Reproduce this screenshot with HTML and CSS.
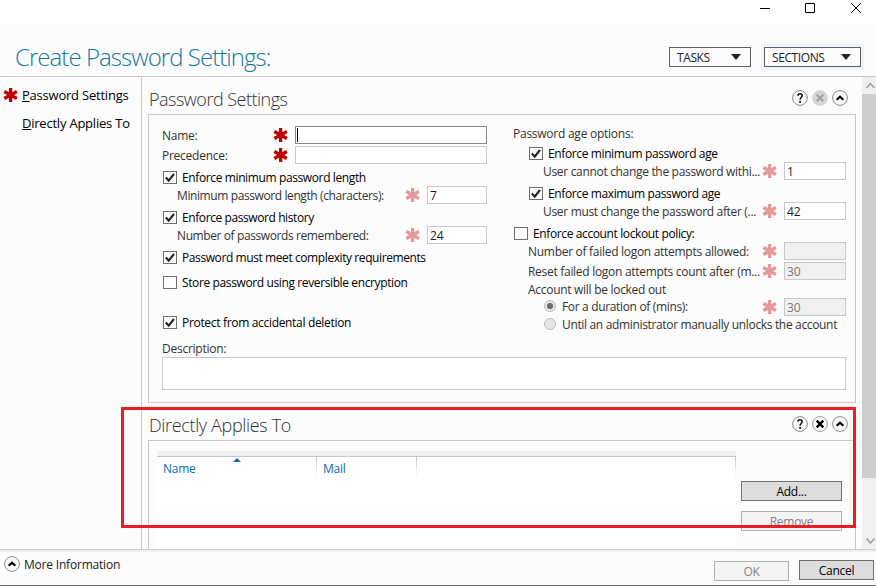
FILE: index.html
```
<!DOCTYPE html>
<html lang="en">
<head>
  <meta charset="UTF-8">
  <title>Create Password Settings</title>
  <link rel="stylesheet" href="styles.css">
</head>
<body>

  <!-- shared icons -->
  <svg class="defs">
    <symbol id="star" viewBox="0 0 16 16">
      <path d="M7.6 1v14M1.3 4.5l12.6 7M1.3 11.5l12.6-7" fill="none" stroke="currentColor" stroke-width="3.3"/>
    </symbol>
    <symbol id="tick" viewBox="0 0 12 11">
      <path d="M1.8 5.6l2.9 3L10 2" fill="none" stroke="#222" stroke-width="2.1"/>
    </symbol>
    <symbol id="cross" viewBox="0 0 16 16">
      <circle cx="8" cy="8" r="7.4" fill="#fafafa" stroke="#999"/>
      <path d="M4.7 4.7l6.6 6.6M11.3 4.7l-6.6 6.6" stroke="#000" stroke-width="2.4"/>
    </symbol>
    <symbol id="cross-off" viewBox="0 0 16 16">
      <circle cx="8" cy="8" r="7.9" fill="#d6d6d6"/>
      <path d="M4.7 4.7l6.6 6.6M11.3 4.7l-6.6 6.6" stroke="#a3a3a3" stroke-width="2.2"/>
    </symbol>
    <symbol id="up" viewBox="0 0 16 16">
      <circle cx="8" cy="8" r="7.4" fill="#fafafa" stroke="#8c8c8c"/>
      <path d="M4.7 9.8L8 6.7l3.3 3.1" fill="none" stroke="#000" stroke-width="2.2"/>
    </symbol>
    <symbol id="help" viewBox="0 0 16 16">
      <circle cx="8" cy="8" r="7.4" fill="#fafafa" stroke="#8c8c8c"/>
      <path d="M5.9 5.7c0-2.5 4.3-2.5 4.3 0 0 1.6-2.1 1.7-2.1 4" fill="none" stroke="#111" stroke-width="1.5"/>
      <path d="M7.2 11h1.8v1.8H7.2z" fill="#111"/>
    </symbol>
  </svg>

  <div class="window">
    <div class="titlebar">
      <svg width="102" height="12" viewBox="0 0 102 12" fill="none" stroke="#000">
        <path d="M0 6.5h10M45.5 1.5h9v9h-9zM91 1l10 10M101 1L91 11"/>
      </svg>
    </div>

    <div class="header">
      <h1>Create Password Settings:</h1>
      <div class="menus">
        <div class="menu tasks"><span>TASKS</span><i></i></div>
        <div class="menu sections"><span>SECTIONS</span><i></i></div>
      </div>
    </div>

    <div class="main">
      <div class="sidebar">
        <div class="nav-item"><svg class="star"><use href="#star"/></svg><span><u>P</u>assword Settings</span></div>
        <div class="nav-item"><span><u>D</u>irectly Applies To</span></div>
      </div>

      <div class="content">
        <div class="section-head">
          <h2>Password Settings</h2>
          <div class="tools">
            <svg><use href="#help"/></svg>
            <svg><use href="#cross-off"/></svg>
            <svg><use href="#up"/></svg>
          </div>
        </div>

        <div class="panel settings">
          <div class="columns">
            <div class="left">
              <div class="row wide"><label>Name:</label><svg class="star"><use href="#star"/></svg><input class="active" type="text"></div>
              <div class="row wide"><label>Precedence:</label><svg class="star"><use href="#star"/></svg><input type="text"></div>
              <div class="check"><span class="box"><svg><use href="#tick"/></svg></span><span>Enforce minimum password length</span></div>
              <div class="row sub"><label>Minimum password length (characters):</label><svg class="star pale"><use href="#star"/></svg><input type="text" value="7"></div>
              <div class="check"><span class="box"><svg><use href="#tick"/></svg></span><span>Enforce password history</span></div>
              <div class="row sub"><label>Number of passwords remembered:</label><svg class="star pale"><use href="#star"/></svg><input type="text" value="24"></div>
              <div class="check"><span class="box"><svg><use href="#tick"/></svg></span><span>Password must meet complexity requirements</span></div>
              <div class="check spaced"><span class="box"></span><span>Store password using reversible encryption</span></div>
              <div class="check protect"><span class="box"><svg><use href="#tick"/></svg></span><span>Protect from accidental deletion</span></div>
            </div>

            <div class="right">
              <div class="caption">Password age options:</div>
              <div class="check inner"><span class="box"><svg><use href="#tick"/></svg></span><span>Enforce minimum password age</span></div>
              <div class="row deep"><label>User cannot change the password withi...</label><svg class="star pale"><use href="#star"/></svg><input type="text" value="1"></div>
              <div class="check inner"><span class="box"><svg><use href="#tick"/></svg></span><span>Enforce maximum password age</span></div>
              <div class="row deep"><label>User must change the password after (...</label><svg class="star pale"><use href="#star"/></svg><input type="text" value="42"></div>
              <div class="check"><span class="box"></span><span>Enforce account lockout policy:</span></div>
              <div class="row"><label>Number of failed logon attempts allowed:</label><svg class="star pale"><use href="#star"/></svg><input type="text" disabled></div>
              <div class="row stacked"><label>Reset failed logon attempts count after (m...</label><svg class="star pale"><use href="#star"/></svg><input type="text" value="30" disabled></div>
              <div class="row locked"><label>Account will be locked out</label></div>
              <div class="row radio"><span class="dot on"></span><label>For a duration of (mins):</label><svg class="star pale"><use href="#star"/></svg><input type="text" value="30" disabled></div>
              <div class="row radio"><span class="dot"></span><label>Until an administrator manually unlocks the account</label></div>
            </div>
          </div>

          <div class="description">
            <label>Description:</label>
            <textarea></textarea>
          </div>
        </div>

        <div class="section-head applies">
          <h2>Directly Applies To</h2>
          <div class="tools">
            <svg><use href="#help"/></svg>
            <svg><use href="#cross"/></svg>
            <svg><use href="#up"/></svg>
          </div>
        </div>

        <div class="panel members">
          <div class="table">
            <div class="band"></div>
            <div class="thead">
              <div class="th name">Name<i class="sort"></i></div>
              <div class="th mail">Mail</div>
              <div class="th rest"></div>
            </div>
          </div>
          <div class="actions">
            <button>Add...</button>
            <button disabled>Remove</button>
          </div>
        </div>
      </div>

      <div class="scrollbar">
        <svg viewBox="0 0 14 17"><path d="M4.5 11l4-4.5 4 4.5" fill="none" stroke="#999" stroke-width="1.4"/></svg>
        <div class="thumb"></div>
        <svg viewBox="0 0 14 17"><path d="M4.5 6.5l4 4.5 4-4.5" fill="none" stroke="#999" stroke-width="1.4"/></svg>
      </div>
    </div>

    <div class="footer">
      <div class="more"><svg><use href="#up"/></svg><span>More Information</span></div>
      <button class="ok" disabled>OK</button>
      <button class="cancel">Cancel</button>
    </div>

    <div class="highlight"></div>
  </div>

</body>
</html>
```
FILE: styles.css
```
* {
  box-sizing: border-box;
}
body {
  margin: 0;
  font-family: "Open Sans", "Noto Sans", sans-serif;
  font-size: 12px;
  letter-spacing: -0.25px;
  color: #000;
  overflow: hidden;
}
.defs {
  display: none;
}
.window {
  position: relative;
  display: flex;
  flex-direction: column;
  width: 876px;
  height: 586px;
  background: #fcfcfc;
  border-bottom: 1px solid #707070;
}
.titlebar {
  height: 24px;
  background: #fff;
  display: flex;
  justify-content: flex-end;
  padding: 2px 14px 0 0;
}
.header {
  height: 53px;
  display: flex;
  justify-content: space-between;
  padding: 23px 15px 0 15px;
  border-bottom: 1px solid #c8c8c8;
}
h1 {
  margin: -7px 0 0;
  font-size: 24px;
  font-weight: 300;
  line-height: 34px;
  letter-spacing: -0.95px;
  color: #147a9c;
  white-space: nowrap;
}
.menus {
  display: flex;
  gap: 13px;
}
.menu {
  display: flex;
  justify-content: space-between;
  align-items: center;
  height: 20px;
  padding: 0 9px 0 7px;
  border: 1px solid #606060;
  color: #222;
  letter-spacing: -0.4px;
}
.menu i {
  border: 5px solid transparent;
  border-top: 6px solid #222;
  border-bottom: 0;
}
.tasks {
  width: 82px;
}
.sections {
  width: 97px;
  box-shadow: 0 0 0 3px #eef2fd;
}

.main {
  display: flex;
  height: 472px;
}
.sidebar {
  width: 142px;
  border-right: 1px solid #c8c8c8;
  padding-top: 8px;
  font-size: 13px;
  letter-spacing: -0.22px;
}
.nav-item {
  display: flex;
  align-items: center;
  justify-content: flex-end;
  height: 20px;
  margin-bottom: 8px;
}
.nav-item span {
  width: 119px;
  white-space: nowrap;
}
.nav-item .star {
  margin: -1px 3px 0 0;
}
.star {
  width: 16px;
  height: 16px;
  flex: none;
  color: #c00000;
}
.pale {
  color: #e69999;
}

.content {
  width: 720px;
  padding: 0 6px;
  overflow: hidden;
}
.section-head {
  display: flex;
  justify-content: space-between;
  height: 37px;
  padding: 10px 8px 0 1px;
}
h2 {
  margin: 0;
  font-size: 18px;
  font-weight: 300;
  line-height: 25px;
  letter-spacing: -0.5px;
  color: #333;
}
.applies h2 {
  letter-spacing: -0.35px;
}
.tools {
  display: flex;
  gap: 4px;
  padding-top: 3px;
}
.tools svg,
.more svg {
  width: 16px;
  height: 16px;
}
.panel {
  border: 1px solid #c8c8c8;
}
.settings {
  height: 289px;
  padding: 0 9px 0 13px;
}
.columns {
  display: flex;
  height: 225px;
}
.left {
  width: 325px;
  padding-top: 11px;
}
.right {
  width: 333px;
  margin-left: 26px;
  padding-top: 10px;
}
label,
.caption {
  color: #333;
  white-space: nowrap;
}
.row {
  display: flex;
  align-items: center;
  height: 18px;
}
.row label {
  flex: 1;
  min-width: 0;
}
.row .star {
  margin-right: 6px;
}
.wide {
  margin-bottom: 2px;
}
.wide input {
  width: 192px;
}
.sub {
  padding-left: 15px;
  letter-spacing: -0.4px;
}
.sub input {
  width: 60px;
}
.right .row {
  padding-left: 15px;
  letter-spacing: -0.29px;
}
.right .deep {
  padding-left: 30px;
  letter-spacing: -0.32px;
}
.right input {
  width: 62px;
}
input,
textarea {
  height: 18px;
  margin: 0;
  padding: 0 2px;
  border: 1px solid #c8c8c8;
  border-radius: 0;
  background: #fff;
  color: #222;
  font: inherit;
  line-height: 16px;
  letter-spacing: 0;
}
input:disabled {
  background: #f0f0f0;
  color: #777;
}
/* focused field with the text caret */
.active {
  border-color: #888;
  background: linear-gradient(#000, #000) 1px 1px / 1px 14px no-repeat #fff;
}
.check {
  display: flex;
  align-items: center;
  gap: 5px;
  height: 17px;
  margin-top: 5px;
  padding-left: 1px;
  letter-spacing: -0.38px;
  white-space: nowrap;
}
.sub + .check {
  letter-spacing: -0.41px;
}
.spaced {
  margin-top: 8px;
}
.left .protect {
  margin-top: 23px;
  letter-spacing: -0.32px;
}
.inner {
  padding-left: 16px;
}
.box {
  display: flex;
  width: 14px;
  height: 13px;
  border: 1px solid #707070;
  background: #fff;
}
.box svg {
  width: 12px;
  height: 11px;
}
.caption {
  height: 18px;
  line-height: 18px;
}
.caption + .check {
  margin-top: 2px;
}
.stacked {
  margin-top: 2px;
}
.right .radio {
  padding-left: 31px;
  letter-spacing: -0.34px;
}
.radio label,
.dot {
  margin-bottom: 2px;
}
.dot {
  width: 12px;
  height: 12px;
  margin-right: 6px;
  border: 1px solid #bcbcbc;
  border-radius: 50%;
  background: #e6e6e6;
}
.on {
  background: radial-gradient(circle, #707070 2.8px, #e6e6e6 3.4px);
}
.description label {
  display: block;
  height: 17px;
  line-height: 17px;
}
.description textarea {
  display: block;
  width: 684px;
  height: 33px;
  resize: none;
}

.members {
  display: flex;
  height: 140px;
  padding: 10px 13px 0 8px;
  justify-content: space-between;
}
.table {
  width: 579px;
  background: #fff;
}
.band {
  height: 5px;
  background: #f0f0f0;
}
.thead {
  display: flex;
  border-top: 1px solid #c8c8c8;
  height: 24px;
  color: #0b6cb5;
}
.th {
  position: relative;
  padding-left: 6px;
  line-height: 24px;
  background: linear-gradient(#c8c8c8, #fff) right top / 1px 20px no-repeat;
}
.name {
  width: 160px;
}
.mail {
  width: 100px;
}
.rest {
  flex: 1;
}
.sort {
  position: absolute;
  left: 76px;
  top: 1px;
  border: 4px solid transparent;
  border-top: 0;
  border-bottom-color: #0b6cb5;
}
.actions {
  display: flex;
  flex-direction: column;
  gap: 10px;
  padding-top: 30px;
}
button {
  width: 101px;
  height: 20px;
  padding: 0;
  border: 1px solid #707070;
  background: #ddd;
  color: #000;
  font: inherit;
  letter-spacing: inherit;
}
button:disabled {
  border-color: #adb2b5;
  background: #f4f4f4;
  color: #838383;
}

.scrollbar {
  width: 14px;
  background: #f0f0f0;
  display: flex;
  flex-direction: column;
}
.scrollbar svg {
  width: 14px;
  height: 17px;
}
.scrollbar .thumb {
  height: 384px;
  margin-bottom: 54px;
  background: #cdcdcd;
}

.footer {
  display: flex;
  height: 36px;
  padding: 6px 2px 0 4px;
  border-top: 1px solid #cdcdcd;
  box-shadow: inset 0 2px #f0f0f0;
}
.more {
  display: flex;
  align-items: center;
  gap: 4px;
  height: 16px;
  margin-right: auto;
  color: #222;
  letter-spacing: -0.2px;
}
.footer button {
  width: 75px;
}
.ok {
  margin: 5px 10px 0 0;
}
.cancel {
  margin-top: 4px;
}

/* callout around the second section */
.highlight {
  position: absolute;
  left: 121px;
  top: 407px;
  width: 735px;
  height: 121px;
  border: 3px solid #ed1c24;
}
```
